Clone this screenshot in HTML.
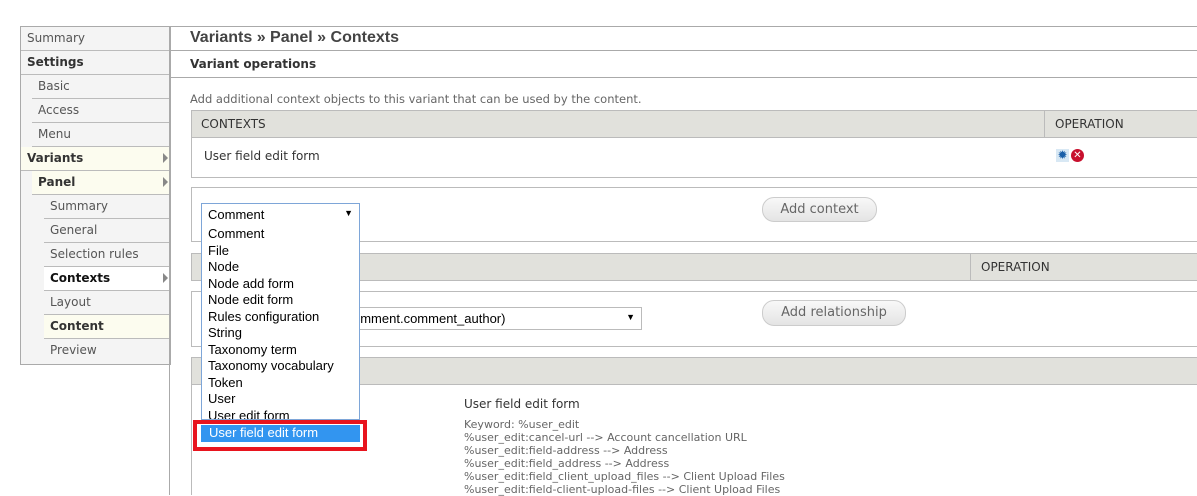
<!DOCTYPE html>
<html><head><meta charset="utf-8"><style>
*{box-sizing:border-box;margin:0;padding:0}
body{width:1197px;height:495px;overflow:hidden;background:#fff;font-family:"DejaVu Sans","Liberation Sans",sans-serif;font-size:12px;color:#333;position:relative}
.a{position:absolute}
.side{left:20px;top:26px;width:151px;height:339px;border:1px solid #aaa;background:#f4f4f4}
.side div{position:absolute;height:24px;line-height:23px;border-bottom:1px solid #bbb;right:0;font-size:12px;color:#555}
.side b{color:#333}
.tri{position:absolute;right:2px;top:6px;width:0;height:0;border-left:5px solid #888;border-top:5px solid transparent;border-bottom:5px solid transparent}
.hd{background:#e1e1dc;border-top:1px solid #bbb;border-bottom:1px solid #bbb;font-size:12px;color:#333}
.btn{border:1px solid #ccc;border-radius:12px;background:linear-gradient(#f8f8f8,#e4e4e4);color:#666;font-size:13px;text-align:center}
.dd div{height:16.5px;line-height:16px;padding-left:6px;font-family:"Liberation Sans",sans-serif;font-size:13px;color:#000}
.kw{font-size:11px;color:#666;line-height:13px}
</style></head><body>
<div class="a side">
<div style="left:0;top:0"><span style="padding-left:6px">Summary</span></div>
<div style="left:0;top:24px"><b style="padding-left:6px">Settings</b></div>
<div style="left:11px;top:48px;padding-left:6px">Basic</div>
<div style="left:11px;top:72px;padding-left:6px">Access</div>
<div style="left:11px;top:96px;padding-left:6px">Menu</div>
<div style="left:0;top:120px;background:#fcfcef;padding-left:6px"><b>Variants</b><i class="tri"></i></div>
<div style="left:11px;top:144px;background:#fcfcef;padding-left:6px"><b>Panel</b><i class="tri"></i></div>
<div style="left:23px;top:168px;padding-left:6px">Summary</div>
<div style="left:23px;top:192px;padding-left:6px">General</div>
<div style="left:23px;top:216px;padding-left:6px">Selection rules</div>
<div style="left:23px;top:240px;background:#fff;padding-left:6px"><b style="color:#111">Contexts</b><i class="tri"></i></div>
<div style="left:23px;top:264px;padding-left:6px">Layout</div>
<div style="left:23px;top:288px;background:#fcfcef;padding-left:6px"><b>Content</b></div>
<div style="left:23px;top:312px;padding-left:6px;border:none">Preview</div>
</div>
<div class="a" style="left:169px;top:26px;width:1px;height:469px;background:#aaa"></div>
<div class="a" style="left:170px;top:26px;width:1027px;border-top:1px solid #aaa;border-bottom:1px solid #aaa;height:25px"></div>
<div class="a" style="left:190px;top:29px;font-family:'Liberation Sans',sans-serif;font-size:16px;font-weight:bold;color:#444">Variants » Panel » Contexts</div>
<div class="a" style="left:190px;top:57px;font-size:12px;font-weight:bold;color:#333">Variant operations</div>
<div class="a" style="left:170px;top:77px;width:1027px;height:1px;background:#aaa"></div>
<div class="a" style="left:190px;top:92px;font-size:11.5px;color:#666">Add additional context objects to this variant that can be used by the content.</div>

<div class="a hd" style="left:191px;top:110px;width:1006px;height:28px;border-left:1px solid #bbb"><span class="a" style="left:9px;top:6px">CONTEXTS</span><span class="a" style="left:852px;top:0;height:26px;border-left:1px solid #bbb;padding:6px 10px">OPERATION</span></div>
<div class="a" style="left:191px;top:137px;width:1006px;height:41px;border-left:1px solid #bbb;border-bottom:1px solid #bbb"><span class="a" style="left:12px;top:12px">User field edit form</span>
<span class="a" style="left:864px;top:12px;width:13px;height:13px;background:#d8e8f4;color:#1a5fa8;font-size:12px;line-height:13px;text-align:center">✹</span>
<span class="a" style="left:879px;top:12px;width:13px;height:13px;border-radius:50%;background:#c8102e;color:#fff;font-size:10px;line-height:13px;text-align:center;font-weight:bold">✕</span></div>

<div class="a" style="left:191px;top:187px;width:1006px;height:55px;border:1px solid #bbb;border-right:none"></div>
<div class="a" style="left:201px;top:203px;width:159px;height:24px;border:1px solid #7ea6d8;font-family:'Liberation Sans',sans-serif;font-size:13px;color:#000;padding:3px 6px">Comment<span class="a" style="right:6px;top:4px;font-size:9px">▼</span></div>
<div class="a btn" style="left:762px;top:197px;width:115px;height:25px;line-height:23px">Add context</div>

<div class="a hd" style="left:191px;top:253px;width:1006px;height:28px;border-left:1px solid #bbb"><span class="a" style="left:778px;top:0;height:26px;border-left:1px solid #bbb;padding:6px 10px">OPERATION</span></div>
<div class="a" style="left:191px;top:291px;width:1006px;height:56px;border:1px solid #bbb;border-right:none"></div>
<div class="a" style="left:300px;top:307px;width:342px;height:23px;border:1px solid #bbb;font-family:'Liberation Sans',sans-serif;font-size:13px;color:#000;padding:3px 6px 3px 52px">omment.comment_author)<span class="a" style="right:6px;top:4px;font-size:9px">▼</span></div>
<div class="a btn" style="left:762px;top:300px;width:144px;height:26px;line-height:24px">Add relationship</div>

<div class="a hd" style="left:191px;top:357px;width:1006px;height:28px;border-left:1px solid #bbb"></div>
<div class="a" style="left:191px;top:384px;width:1px;height:111px;background:#bbb"></div>
<div class="a" style="left:464px;top:397px;font-size:12px;color:#333">User field edit form</div>
<div class="a kw" style="left:464px;top:418px">Keyword: %user_edit<br>%user_edit:cancel-url --&gt; Account cancellation URL<br>%user_edit:field-address --&gt; Address<br>%user_edit:field_address --&gt; Address<br>%user_edit:field_client_upload_files --&gt; Client Upload Files<br>%user_edit:field-client-upload-files --&gt; Client Upload Files</div>

<div class="a dd" style="left:201px;top:226px;width:159px;height:194px;background:#fff;border:1px solid #7ea6d8;border-top:none;overflow:hidden">
<div>Comment</div><div>File</div><div>Node</div><div>Node add form</div><div>Node edit form</div><div>Rules configuration</div><div>String</div><div>Taxonomy term</div><div>Taxonomy vocabulary</div><div>Token</div><div>User</div><div>User edit form</div>
</div>
<div class="a" style="left:193px;top:420px;width:174px;height:31px;border:4px solid #e8141e;background:#fff"></div>
<div class="a" style="left:201px;top:425px;width:159px;height:17px;background:#3295f0;color:#fff;font-family:'Liberation Sans',sans-serif;font-size:13px;line-height:16px;padding-left:8px">User field edit form</div>
</body></html>
